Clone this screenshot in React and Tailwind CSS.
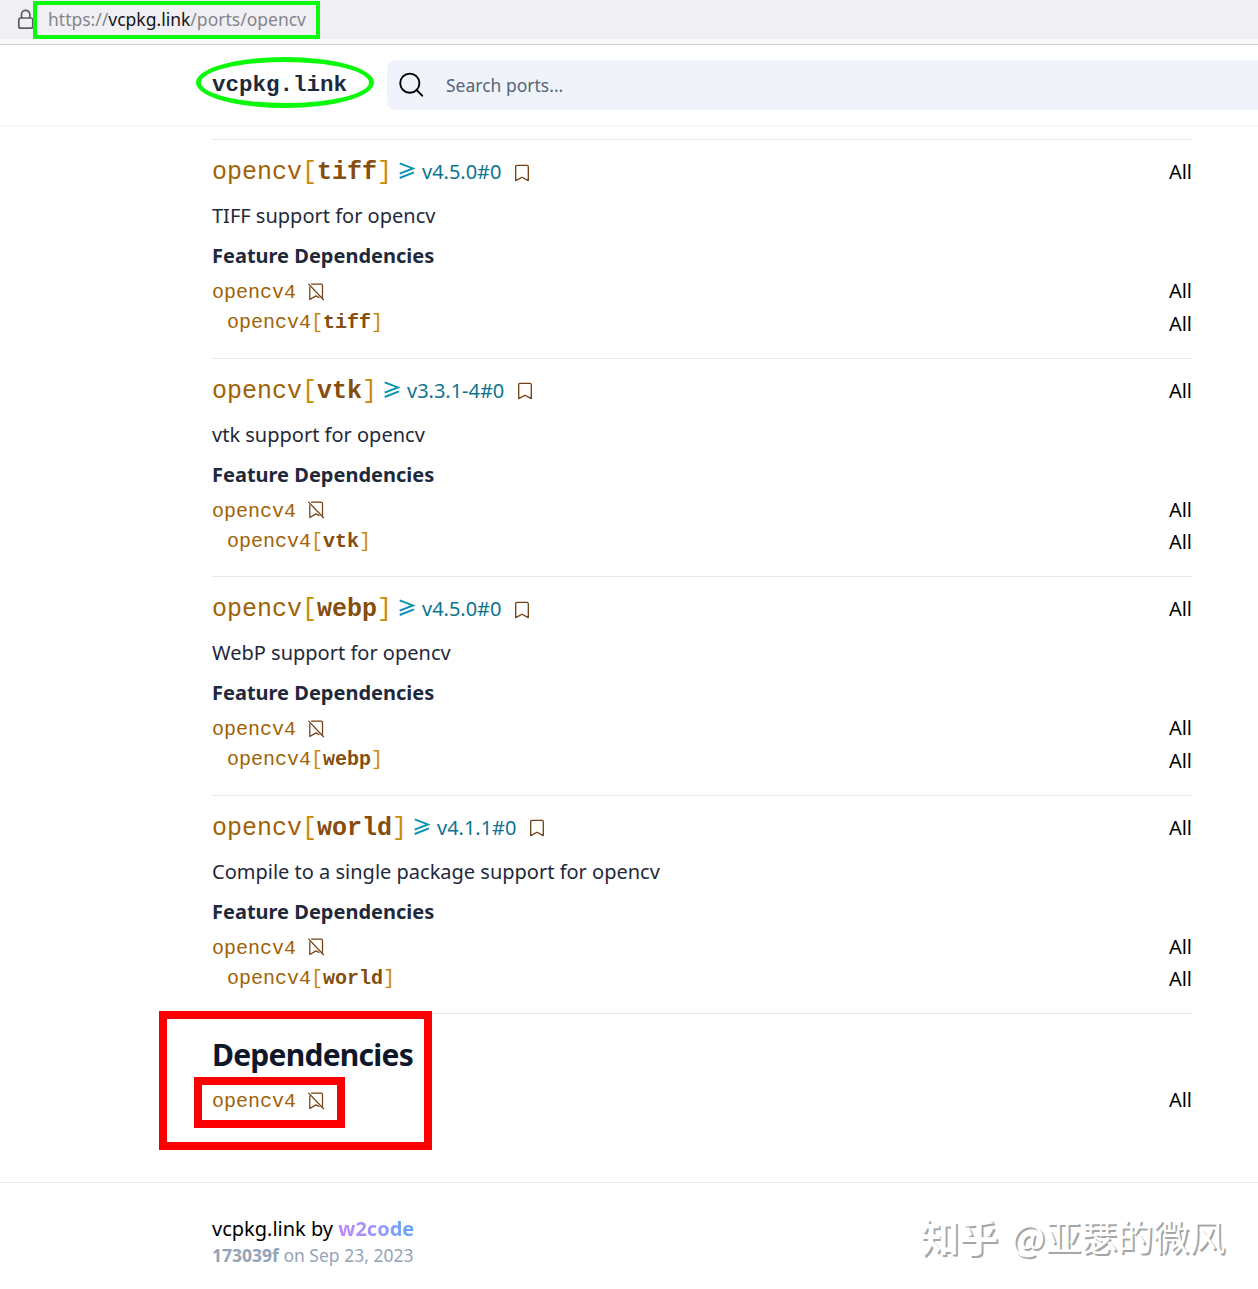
const ports = [
  { name: "tiff", version: "v4.5.0#0", text: "TIFF support for opencv" },
  { name: "vtk", version: "v3.3.1-4#0", text: "vtk support for opencv" },
  { name: "webp", version: "v4.5.0#0", text: "WebP support for opencv" },
  { name: "world", version: "v4.1.1#0", text: "Compile to a single package support for opencv" },
];

const mono = "font-['Liberation_Mono',monospace]";

function Bookmark() {
  return (
    <svg className="ml-[12.6px] mt-[1px] h-[18px] w-[16px] text-[#713f12]" viewBox="0 0 16 18" fill="none" stroke="currentColor" strokeWidth="1.3" strokeLinejoin="round">
      <path d="M1.7 16.6V2.7Q1.7 1.4 3 1.4H13Q14.3 1.4 14.3 2.7V16.6L8 13.2Z" />
    </svg>
  );
}

function BookmarkOff() {
  return (
    <svg className="ml-[12px] mt-px h-[18px] w-[17px] text-[#713f12]" viewBox="0 0 17 18" fill="none" stroke="currentColor" strokeWidth="1.25" strokeLinejoin="round" strokeLinecap="round">
      <path d="M3.6 1.2H13.2Q14.5 1.2 14.5 2.5V14.2M1.8 4V16.5L8 12.9L11 14.5M0.7 1.1L15.5 16.7" />
    </svg>
  );
}

function AtLeast() {
  return (
    <svg className="mb-[2px] ml-[7px] mr-[7px] h-[18px] w-[16px]" viewBox="0 0 16 18" fill="none" stroke="#0891b2" strokeWidth="1.9">
      <path d="M.7 1.4L14 6.4L.7 11.6M.7 16L15 10.4" />
    </svg>
  );
}

function All() {
  return <span className="ml-auto text-black">All</span>;
}

function Dependency() {
  return (
    <div className="flex h-8 items-center">
      <span className={`${mono} mt-[4px] text-[#a16207]`}>opencv4</span>
      <BookmarkOff />
      <All />
    </div>
  );
}

function Port({ name, version, text }) {
  return (
    <section className="h-[218.5px] border-t border-gray-200 pt-[14px]">
      <div className="flex h-9 items-center">
        <span className={`${mono} mt-[2px] text-[25px] text-[#a16207]`}>
          opencv<span className="text-[#ca8a04]">[</span>
          <b className="text-[#854d0e]">{name}</b>
          <span className="text-[#ca8a04]">]</span>
        </span>
        <AtLeast />
        <span className="tracking-[-0.03px] text-[#0e7490]">{version}</span>
        <Bookmark />
        <All />
      </div>
      <p className="mt-[6px] h-10 leading-10">{text}</p>
      <h3 className="h-10 font-bold leading-10">Feature Dependencies</h3>
      <div className="-mt-px">
        <Dependency />
      </div>
      <div className="mt-[0.6px] flex h-8 items-center pl-[15px]">
        <span className={`${mono} -mt-[1px] text-[#a16207]`}>
          opencv4<span className="text-[#ca8a04]">[</span>
          <b className="text-[#854d0e]">{name}</b>
          <span className="text-[#ca8a04]">]</span>
        </span>
        <All />
      </div>
    </section>
  );
}

export default function App() {
  return (
    <div className="relative h-[1289px] w-[1258px] overflow-hidden bg-white font-['Noto_Sans',sans-serif] text-[20px] leading-8 text-[#1e293b]">
      <div className="h-[45px] border-b border-[#cccccf] bg-[#f9f9fb]">
        <div className="flex h-[39px] items-center bg-[#f0f0f4] pl-[17px] text-[17.5px] text-[#85858b]">
          <svg className="h-[21px] w-[17px]" viewBox="0 0 17 21" fill="none" stroke="#5b5b66" strokeWidth="1.7">
            <rect x="1.8" y="9" width="14" height="10.2" rx="2" />
            <path d="M4.5 9V5.5a4.2 4.2 0 0 1 8.4 0V9" />
          </svg>
          <span className="-mt-[2px] ml-[14px]">
            https://<span className="text-[#15141a]">vcpkg.link</span>/ports/opencv
          </span>
        </div>
      </div>
      <header className="flex h-[81px] items-center border-b border-[#f3f4f6] pl-[212px]">
        <span className={`${mono} w-[175px] text-[22.5px] font-bold`}>vcpkg.link</span>
        <div className="flex h-[50px] flex-1 items-center rounded-l-lg bg-[#f0f4fa] pl-[12px] text-[17.5px] text-[#56657a]">
          <svg className="h-[26px] w-[26px]" viewBox="0 0 26 26" fill="none" stroke="#000" strokeWidth="1.9" strokeLinecap="round">
            <circle cx="10.8" cy="11.2" r="9.6" />
            <path d="M17.6 18L23.2 23.7" />
          </svg>
          <span className="ml-[21px]">Search ports...</span>
        </div>
      </header>
      <main className="ml-[212px] mt-[13px] w-[980px]">
        {ports.map((p) => (
          <Port key={p.name} {...p} />
        ))}
        <section className="h-[169px] border-t border-gray-200 pt-[21px]">
          <h2 className="mb-[9px] h-10 text-[30px] font-bold leading-10 tracking-[-0.75px] text-[#0f172a]">Dependencies</h2>
          <Dependency />
        </section>
      </main>
      <footer className="flex h-[107px] justify-between border-t border-gray-200 pl-[212px] pr-[33px]">
        <div className="pt-[31px]">
          <p className="h-[29px] leading-[30px] text-black">
            vcpkg.link by{" "}
            <b className="bg-gradient-to-r from-[#c084fc] to-[#60a5fa] bg-clip-text text-transparent">w2code</b>
          </p>
          <p className="h-[25px] text-[17.5px] leading-[25px] text-[#94a3b8]">
            <b>173039f</b> on Sep 23, 2023
          </p>
        </div>
        <div className="flex h-[103px] items-center font-['Noto_Sans_CJK_SC',sans-serif] text-[36px] text-white [text-shadow:2px_2px_0.5px_#a6a6a6]">
          <span className="mr-[13px] text-[39px] font-bold">知乎</span>
          <span>@亚瑟的微风</span>
        </div>
      </footer>

      <div className="absolute left-[33px] top-px h-[38px] w-[287px] border-[4.5px] border-[#0bfa0b]" />
      <div className="absolute left-[196px] top-[57px] h-[51px] w-[178px] rounded-[50%] border-[5px] border-[#0bfa0b]" />
      <div className="absolute left-[159px] top-[1011px] h-[139px] w-[273px] border-8 border-[#fa0000]" />
      <div className="absolute left-[194px] top-[1077px] h-[51px] w-[151px] border-8 border-[#fa0000]" />
    </div>
  );
}
